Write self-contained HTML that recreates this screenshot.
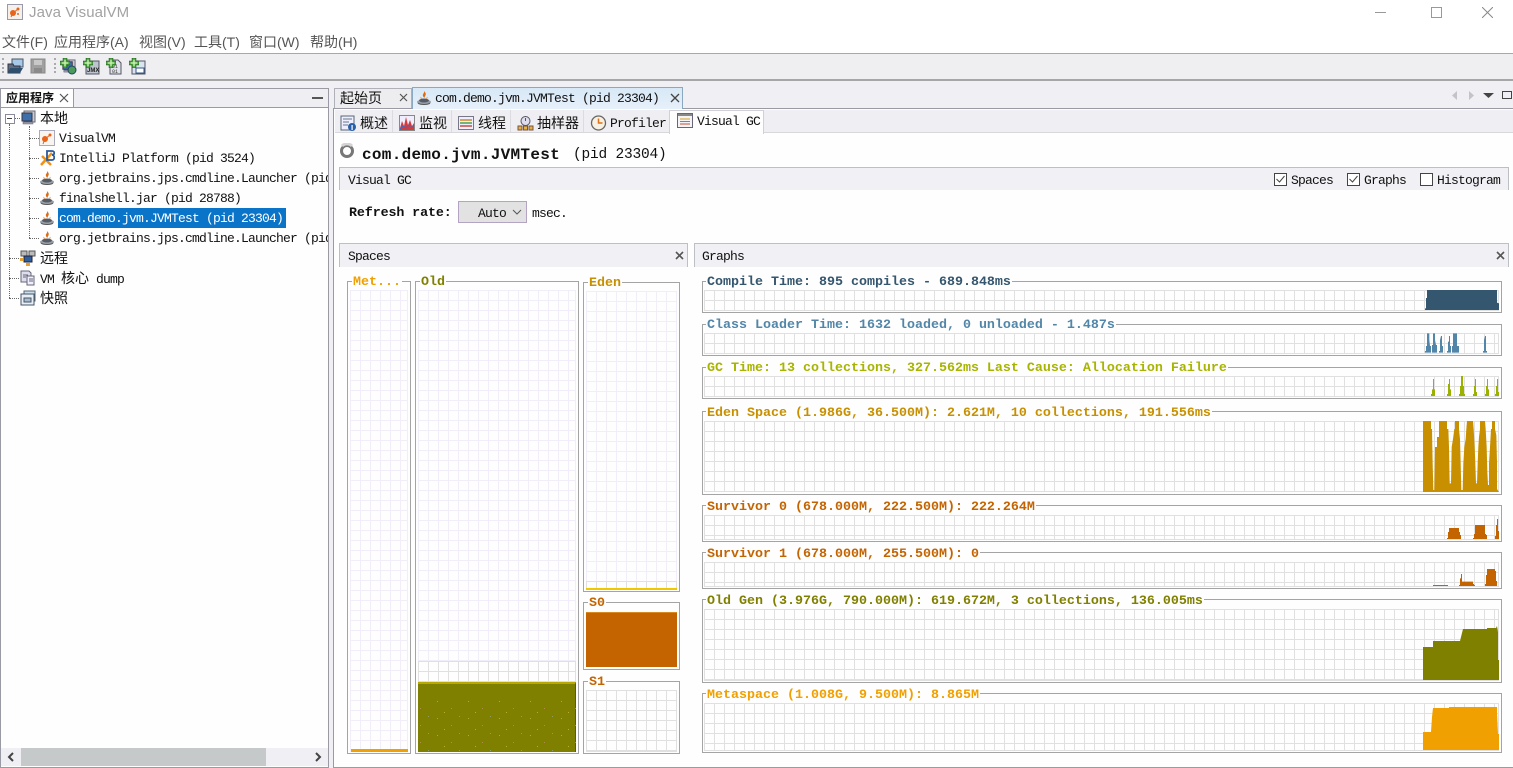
<!DOCTYPE html>
<html><head><meta charset="utf-8"><title>Java VisualVM</title>
<style>
html,body{margin:0;padding:0;width:1513px;height:768px;overflow:hidden;background:#f0f0f4}
body{position:relative;font-family:"Liberation Mono","Noto Sans CJK SC",monospace;color:#111}
div,span.t,svg.i{position:absolute}
.t{position:absolute;white-space:pre;line-height:20px;font-size:13px;letter-spacing:-.8px;height:20px;margin-top:1px}
.c{font-family:"Liberation Sans","Noto Sans CJK SC",sans-serif;font-size:14px;letter-spacing:0;margin-top:0}
.m{font-family:"Liberation Sans","Noto Sans CJK SC",sans-serif;font-size:14px;letter-spacing:0;color:#555;margin-top:0}
.b{font-weight:bold;font-size:13.34px;letter-spacing:0;background:#fefefe;padding:0 1px;height:13px;line-height:14px;margin-top:5px}
.box{border:1px solid #a4a4a4;box-sizing:border-box;background:#fefefe}
.g{background-image:linear-gradient(to right,#e0e0e0 1px,transparent 1px),linear-gradient(to bottom,#e0e0e0 1px,transparent 1px);background-size:10px 10px;border-right:1px solid #e0e0e0;border-bottom:1px solid #e0e0e0;box-sizing:border-box}
.l{background-image:linear-gradient(to right,#f1eefa 1px,transparent 1px),linear-gradient(to bottom,#f1eefa 1px,transparent 1px);background-size:10px 10px;border-right:1px solid #f1eefa;box-sizing:border-box}
.hd{background:#f0f0f5;border:1.5px solid #bcc0c6;border-bottom:0;box-sizing:border-box}
.sep{width:1px;background:#dcdce0;top:110px;height:22px}
.d{border-left:1px dotted #666;width:0}
.h{border-top:1px dotted #666;height:0}
</style></head><body>
<svg width="0" height="0" style="position:absolute"><defs>
<symbol id="java" viewBox="0 0 16 16"><path d="M8 1c1 2-2 3-1 5 .3 1 1 1.500 1.500 2-.2-1.500 2-3 1-5C9.300 2.500 9 2 8 1z" fill="#e06a10"/><path d="M5 7c-.5 1 .5 2 1 2M11 7c.5 1-.5 2-1 2" stroke="#e8a060" fill="none"/><ellipse cx="8" cy="12" rx="7" ry="2.500" fill="#9aa0a8"/><ellipse cx="8" cy="10.500" rx="5" ry="2" fill="#555c66"/><path d="M2 13c2 2 10 2 12 0" stroke="#555" fill="none"/></symbol>
<symbol id="plus" viewBox="0 0 16 16"><path d="M5 0h6v5h5v6h-5v5H5v-5H0V5h5z" fill="#5ab04a" stroke="#1f5f1f" stroke-width="1.200"/><path d="M8 3v10M3 8h10" stroke="#d0f4b8" stroke-width="2"/></symbol>
<symbol id="mon" viewBox="0 0 16 16"><rect x="4" y="1" width="11" height="11" fill="#c8ccd4" stroke="#667"/><rect x="2" y="3" width="10" height="8" fill="#3f6fa8" stroke="#334"/><rect x="3" y="12" width="10" height="2" fill="#99a" stroke="#667" stroke-width=".5"/></symbol>
</defs></svg>

<!-- title bar -->
<div style="left:0;top:0;width:1513px;height:53px;background:#fff"></div>
<svg class="i" style="left:7px;top:4px" width="16" height="16" viewBox="0 0 16 16"><rect x=".5" y=".5" width="15" height="15" fill="#f4f0ec" stroke="#99a"/><circle cx="6" cy="9" r="3" fill="#e8641a"/><circle cx="11" cy="5" r="1.500" fill="#e8641a"/><circle cx="11" cy="10" r="1" fill="#e8641a"/><path d="M6 9l5-4M4 13l2-4" stroke="#e8641a"/></svg>
<span class="t" style="left:29px;top:3px;margin-top:0;font:15px/20px 'Liberation Sans',sans-serif;letter-spacing:.1px;color:#a2a2a2">Java VisualVM</span>
<div style="left:1375px;top:12px;width:11px;height:1px;background:#999"></div>
<div style="left:1431px;top:7px;width:9px;height:9px;border:1px solid #999"></div>
<svg class="i" style="left:1482px;top:7px" width="11" height="11"><path d="M0 0l11 11M11 0L0 11" stroke="#888"/></svg>

<span class="t m" style="left:2px;top:32px">文件(F)</span>
<span class="t m" style="left:54px;top:32px">应用程序(A)</span>
<span class="t m" style="left:139px;top:32px">视图(V)</span>
<span class="t m" style="left:194px;top:32px">工具(T)</span>
<span class="t m" style="left:249px;top:32px">窗口(W)</span>
<span class="t m" style="left:310px;top:32px">帮助(H)</span>

<!-- toolbar -->
<div style="left:0;top:53px;width:1513px;height:1px;background:#a8a8a8"></div>
<div style="left:0;top:54px;width:1513px;height:25px;background:#efeff2"></div>
<div style="left:0;top:79px;width:1513px;height:1.500px;background:#a6a6a8"></div>
<div style="left:2px;top:58px;height:15px;width:0;border-left:2px dotted #aaa"></div>
<div style="left:54px;top:58px;height:15px;width:0;border-left:2px dotted #aaa"></div>
<svg class="i" style="left:7px;top:58px" width="17" height="16" viewBox="0 0 17 16"><rect x="5" y="1" width="11" height="8" fill="#a8c8e8" stroke="#456"/><path d="M1 6h5l1 2h6v7H1z" fill="#5c6e80" stroke="#334"/><path d="M1 15l2-5h13l-3 5z" fill="#2f4f6f"/></svg>
<svg class="i" style="left:30px;top:58px" width="16" height="16"><path d="M1 1h14v14H1z" fill="#a0a0a0" stroke="#888"/><rect x="4" y="2" width="8" height="5" fill="#c8c8c8"/><rect x="4" y="10" width="8" height="5" fill="#8a8a8a"/></svg>
<svg class="i" style="left:60px;top:58px" width="17" height="17"><use href="#mon" x="1" y="1" width="15" height="15"/><circle cx="12" cy="12" r="4" fill="#4a9a5a" stroke="#246"/><use href="#plus" x="0" y="0" width="10" height="10"/></svg>
<svg class="i" style="left:83px;top:58px" width="17" height="17"><rect x="3" y="3" width="13" height="13" fill="#bcc4cc" stroke="#556"/><text x="4" y="14" font-size="6" font-weight="bold" font-family="Liberation Sans" fill="#222">JMX</text><use href="#plus" x="0" y="0" width="10" height="10"/></svg>
<svg class="i" style="left:106px;top:58px" width="17" height="17"><path d="M4 2h8l3 3v11H4z" fill="#e0e4e8" stroke="#556"/><text x="6" y="10" font-size="5" fill="#333" font-family="Liberation Mono">01</text><text x="6" y="15" font-size="5" fill="#333" font-family="Liberation Mono">01</text><use href="#plus" x="0" y="0" width="10" height="10"/></svg>
<svg class="i" style="left:129px;top:58px" width="17" height="17"><rect x="3" y="3" width="13" height="13" fill="#d8e4f0" stroke="#556"/><rect x="7" y="10" width="8" height="5" fill="#fff" stroke="#358"/><use href="#plus" x="0" y="0" width="10" height="10"/></svg>

<!-- left panel -->
<div style="left:0;top:88px;width:329px;height:680px;border:1.500px solid #9a9aa4;box-sizing:border-box;background:#fefefe"></div>
<div style="left:1px;top:89px;width:327px;height:18px;background:#eeeef3"></div>
<div style="left:1px;top:107px;width:327px;height:1px;background:#9a9aa4"></div>
<div style="left:1px;top:89px;width:72px;height:18px;background:#fff;border-right:1px solid #9a9aa4"></div>
<span class="t c" style="left:6px;top:88px;font-size:12px;font-weight:bold">应用程序</span>
<svg class="i" style="left:59px;top:93px" width="10" height="10"><path d="M1 1l8 8M9 1L1 9" stroke="#555" stroke-width="1.200"/></svg>
<div style="left:312px;top:97px;width:11px;height:2px;background:#555"></div>

<div class="d" style="left:9px;top:124px;height:174px"></div>
<div class="d" style="left:29px;top:126px;height:112px"></div>
<div class="h" style="left:14px;top:118px;width:6px"></div>
<div class="h" style="left:29px;top:138px;width:10px"></div>
<div class="h" style="left:29px;top:158px;width:10px"></div>
<div class="h" style="left:29px;top:178px;width:10px"></div>
<div class="h" style="left:29px;top:198px;width:10px"></div>
<div class="h" style="left:29px;top:218px;width:10px"></div>
<div class="h" style="left:29px;top:238px;width:10px"></div>
<div class="h" style="left:9px;top:258px;width:10px"></div>
<div class="h" style="left:9px;top:278px;width:10px"></div>
<div class="h" style="left:9px;top:298px;width:10px"></div>
<div style="left:5px;top:114px;width:8px;height:8px;border:1px solid #8a8a9a;background:#fff"></div>
<div style="left:7px;top:118px;width:5px;height:1px;background:#444"></div>
<svg class="i" style="left:20px;top:110px" width="16" height="16"><use href="#mon" width="16" height="16"/></svg>
<span class="t c" style="left:40px;top:108px">本地</span>

<svg class="i" style="left:39px;top:130px" width="16" height="16"><rect x=".5" y=".5" width="15" height="15" fill="#f8f4f0" stroke="#aab"/><circle cx="6" cy="9" r="3" fill="#e8641a"/><circle cx="11" cy="5" r="1.500" fill="#e8641a"/><path d="M6 9l5-4M4 14l2-5" stroke="#e8641a"/></svg>
<span class="t" style="left:59px;top:128px">VisualVM</span>
<svg class="i" style="left:39px;top:150px" width="16" height="16"><path d="M2 15L13 3M3 6l9 9" stroke="#f09010" stroke-width="2.500"/><path d="M8 1h5c3 0 3 4 0 4 3 0 3 5 0 5H8z" fill="none" stroke="#2a5a9a" stroke-width="1.800"/></svg>
<span class="t" style="left:59px;top:148px">IntelliJ Platform (pid 3524)</span>
<svg class="i" style="left:39px;top:170px" width="16" height="16"><use href="#java" width="16" height="16"/></svg>
<span class="t" style="left:59px;top:168px;width:269px;overflow:hidden">org.jetbrains.jps.cmdline.Launcher (pid 12345)</span>
<svg class="i" style="left:39px;top:190px" width="16" height="16"><use href="#java" width="16" height="16"/></svg>
<span class="t" style="left:59px;top:188px">finalshell.jar (pid 28788)</span>
<svg class="i" style="left:39px;top:210px" width="16" height="16"><use href="#java" width="16" height="16"/></svg>
<div style="left:58px;top:208px;width:228px;height:20px;background:#0a74c8"></div>
<span class="t" style="left:59px;top:208px;color:#fff">com.demo.jvm.JVMTest (pid 23304)</span>
<svg class="i" style="left:39px;top:230px" width="16" height="16"><use href="#java" width="16" height="16"/></svg>
<span class="t" style="left:59px;top:228px;width:269px;overflow:hidden">org.jetbrains.jps.cmdline.Launcher (pid 12345)</span>
<svg class="i" style="left:20px;top:250px" width="16" height="16"><rect x="1" y="1" width="6" height="5" fill="#bbb" stroke="#555"/><rect x="9" y="1" width="6" height="5" fill="#bbb" stroke="#555"/><rect x="4" y="6" width="8" height="6" fill="#2f5f9f" stroke="#223"/><rect x="0" y="8" width="3" height="3" fill="#e8a030"/><rect x="6" y="13" width="4" height="3" fill="#e8a030"/></svg>
<span class="t c" style="left:40px;top:248px">远程</span>
<svg class="i" style="left:20px;top:270px" width="16" height="16"><path d="M1 1h8l2 2v9H1z" fill="#dde" stroke="#667"/><path d="M7 6h7v9H7z" fill="#eef" stroke="#667"/><path d="M3 5h5M3 7h3M9 9h4M9 11h4" stroke="#667"/></svg>
<span class="t" style="left:40px;top:269px;font-family:'Liberation Mono','Noto Sans CJK SC',monospace">VM <span style="font-size:14px;letter-spacing:0">核心</span> dump</span>
<svg class="i" style="left:20px;top:290px" width="16" height="16"><rect x="4" y="1" width="11" height="10" fill="#cde" stroke="#567"/><rect x="1" y="4" width="13" height="11" fill="#e8eef4" stroke="#456"/><rect x="4" y="8" width="7" height="4" fill="#abc" stroke="#456"/></svg>
<span class="t c" style="left:40px;top:288px">快照</span>

<!-- left scrollbar -->
<div style="left:1px;top:748px;width:327px;height:18px;background:#f0f0f4"></div>
<div style="left:21px;top:748px;width:245px;height:18px;background:#c6c9c9"></div>
<svg class="i" style="left:7px;top:752px" width="8" height="10"><path d="M6 1L2 5l4 4" fill="none" stroke="#444" stroke-width="2"/></svg>
<svg class="i" style="left:314px;top:752px" width="8" height="10"><path d="M2 1l4 4-4 4" fill="none" stroke="#444" stroke-width="2"/></svg>

<!-- right panel -->
<div style="left:333px;top:108px;width:1180px;height:660px;background:#fefefe;border-left:1.500px solid #9a9aa4;border-top:1.500px solid #9a9aa4;border-bottom:1.500px solid #9a9aa4;box-sizing:border-box"></div>
<div style="left:334px;top:88px;width:78px;height:20px;background:#ededf0;border:1px solid #b0b0b8;border-bottom:0;box-sizing:border-box"></div>
<span class="t c" style="left:340px;top:88px">起始页</span>
<svg class="i" style="left:399px;top:93px" width="9" height="9"><path d="M1 1l7 7M8 1L1 8" stroke="#555" stroke-width="1.200"/></svg>
<div style="left:412px;top:87px;width:271px;height:22px;background:linear-gradient(#d8e8f6,#e6f0fa);border:1px solid #8aa8c0;border-bottom:0;box-sizing:border-box"></div>
<svg class="i" style="left:416px;top:90px" width="16" height="16"><use href="#java" width="16" height="16"/></svg>
<span class="t" style="left:435px;top:88px">com.demo.jvm.JVMTest (pid 23304)</span>
<svg class="i" style="left:670px;top:93px" width="10" height="10"><path d="M1 1l8 8M9 1L1 9" stroke="#444" stroke-width="1.300"/></svg>
<svg class="i" style="left:1449px;top:88px" width="64" height="12"><path d="M8 3v9L3 7.500z" fill="#c4c4c8"/><path d="M20 3v9l5-4.500z" fill="#c4c4c8"/><path d="M34 5h11l-5.500 5z" fill="#444"/><rect x="53.500" y="3.500" width="9" height="7" fill="none" stroke="#444"/></svg>

<!-- sub tabs -->
<div style="left:335px;top:110px;width:1178px;height:23px;background:#efeff3;border-bottom:1px solid #d8d8dc;box-sizing:border-box"></div>
<div class="sep" style="left:392px"></div><div class="sep" style="left:451px"></div><div class="sep" style="left:510px"></div><div class="sep" style="left:583px"></div>
<div style="left:669px;top:110px;width:95px;height:24px;background:#fefefe;border:1px solid #d0d0d6;border-bottom:0;box-sizing:border-box"></div>
<svg class="i" style="left:340px;top:115px" width="17" height="17"><rect x="1" y="1" width="13" height="14" fill="#eef" stroke="#567"/><path d="M3 4h9M3 7h6M3 10h5" stroke="#678"/><circle cx="12" cy="12" r="4" fill="#2a5fa8"/><rect x="11.500" y="10" width="1.200" height="5" fill="#fff"/></svg>
<span class="t c" style="left:360px;top:113px">概述</span>
<svg class="i" style="left:399px;top:115px" width="16" height="16"><rect x=".5" y=".5" width="15" height="15" fill="#eef" stroke="#888"/><path d="M1 13l2-7 2 5 2-9 2 8 2-5 2 6 2-3v7H1z" fill="#d83a3a"/><path d="M1 14l3-3 3 2 3-3 5 3" stroke="#3a6ac8" fill="none"/></svg>
<span class="t c" style="left:419px;top:113px">监视</span>
<svg class="i" style="left:458px;top:115px" width="16" height="16"><rect x=".5" y="1.500" width="15" height="13" fill="#eef" stroke="#778"/><path d="M2 5h12" stroke="#d08a20" stroke-width="1.500"/><path d="M2 8h12" stroke="#4aa04a" stroke-width="1.500"/><path d="M2 11h12" stroke="#c05040" stroke-width="1.500"/></svg>
<span class="t c" style="left:478px;top:113px">线程</span>
<svg class="i" style="left:517px;top:115px" width="17" height="16"><circle cx="8.500" cy="6" r="4.500" fill="#dde" stroke="#556"/><path d="M8.500 6V3" stroke="#555"/><rect x="1" y="11" width="4" height="4" fill="#e8b040" stroke="#754"/><rect x="6.500" y="11" width="4" height="4" fill="#e8b040" stroke="#754"/><rect x="12" y="11" width="4" height="4" fill="#e8b040" stroke="#754"/></svg>
<span class="t c" style="left:537px;top:113px">抽样器</span>
<svg class="i" style="left:590px;top:115px" width="17" height="16"><circle cx="8.500" cy="8" r="7" fill="#f8f0e0" stroke="#666" stroke-width="1.300"/><path d="M8.500 3.500V8h4" stroke="#e0701a" stroke-width="1.500" fill="none"/></svg>
<span class="t" style="left:610px;top:113px">Profiler</span>
<svg class="i" style="left:677px;top:113px" width="16" height="15"><rect x=".5" y=".5" width="15" height="14" fill="#f4f4f8" stroke="#667"/><path d="M1 2h14" stroke="#888" stroke-width="2"/><path d="M3 6h10" stroke="#d8a020"/><path d="M3 8.500h10" stroke="#60a040"/><path d="M3 11h10" stroke="#c05030"/></svg>
<span class="t" style="left:697px;top:111px">Visual GC</span>

<!-- heading -->
<svg class="i" style="left:339px;top:143px" width="16" height="16"><circle cx="8" cy="8" r="5.500" fill="none" stroke="#777" stroke-width="3"/><path d="M3 3a7 7 0 0 1 10 0" stroke="#d4d4d4" stroke-width="3" fill="none"/></svg>
<span class="t" style="left:362px;top:144px;font-size:16px;font-weight:bold;letter-spacing:.3px;font-family:'Liberation Mono',monospace">com.demo.jvm.JVMTest</span>
<span class="t" style="left:573px;top:144px;font-size:14.5px;letter-spacing:-.2px">(pid 23304)</span>

<div class="hd" style="left:339px;top:167px;width:1170px;height:23px"></div>
<span class="t" style="left:348px;top:170px">Visual GC</span>
<svg class="i" style="left:1274px;top:173px" width="14" height="14"><rect x=".5" y=".5" width="12" height="12" fill="#fff" stroke="#444"/><path d="M2.500 6l3 3 5-6" stroke="#444" fill="none"/></svg>
<span class="t" style="left:1291px;top:170px">Spaces</span>
<svg class="i" style="left:1347px;top:173px" width="14" height="14"><rect x=".5" y=".5" width="12" height="12" fill="#fff" stroke="#444"/><path d="M2.500 6l3 3 5-6" stroke="#444" fill="none"/></svg>
<span class="t" style="left:1364px;top:170px">Graphs</span>
<svg class="i" style="left:1420px;top:173px" width="14" height="14"><rect x=".5" y=".5" width="12" height="12" fill="#fff" stroke="#444"/></svg>
<span class="t" style="left:1437px;top:170px">Histogram</span>

<span class="t" style="left:349px;top:203px;font-weight:bold;letter-spacing:-.1px;font-size:13.34px">Refresh rate:</span>
<div style="left:458px;top:201px;width:69px;height:22px;background:#e2e2e2;border:1px solid #b4a4c4;box-sizing:border-box"></div>
<span class="t" style="left:478px;top:203px">Auto</span>
<svg class="i" style="left:512px;top:209px" width="10" height="7"><path d="M1 1l4 4 4-4" fill="none" stroke="#555"/></svg>
<span class="t" style="left:532px;top:203px">msec.</span>

<!-- spaces -->
<div class="hd" style="left:339px;top:243px;width:349px;height:24px"></div>
<span class="t" style="left:348px;top:246px">Spaces</span>
<svg class="i" style="left:675px;top:251px" width="9" height="9"><path d="M1 1l7 7M8 1L1 8" stroke="#555" stroke-width="1.600"/></svg>
<div class="hd" style="left:694px;top:243px;width:815px;height:24px"></div>
<span class="t" style="left:702px;top:246px">Graphs</span>
<svg class="i" style="left:1496px;top:251px" width="9" height="9"><path d="M1 1l7 7M8 1L1 8" stroke="#555" stroke-width="1.600"/></svg>

<div class="box" style="left:347px;top:281px;width:64px;height:473px"></div>
<div class="l" style="left:350px;top:290px;width:58px;height:462px"></div>
<div style="left:351px;top:749px;width:57px;height:3px;background:#f0a000"></div>
<span class="t b" style="left:352px;top:271px;color:#f0a000">Met...</span>

<div class="box" style="left:415px;top:281px;width:164px;height:473px"></div>
<div class="l" style="left:418px;top:290px;width:158px;height:371px"></div>
<div class="g" style="left:418px;top:661px;width:158px;height:21px"></div>
<div style="left:418px;top:682px;width:158px;height:70px;background:#808000;border-top:2px solid #b8a800;border-right:1px solid #5c5c00;box-sizing:border-box"></div>
<span class="t b" style="left:420px;top:271px;color:#808000">Old</span>

<div class="box" style="left:583px;top:282px;width:97px;height:310px"></div>
<div class="l" style="left:586px;top:291px;width:91px;height:291px"></div>
<div class="g" style="left:586px;top:581px;width:91px;height:8px;border-bottom:0"></div>
<div style="left:586px;top:588px;width:91px;height:1.500px;background:#f0c800"></div>
<span class="t b" style="left:588px;top:272px;color:#c89000">Eden</span>

<div class="box" style="left:583px;top:602px;width:97px;height:68px"></div>
<div style="left:586px;top:612px;width:91px;height:55px;background:#c46400;border-top:1px solid #d88a20;box-sizing:border-box"></div>
<span class="t b" style="left:588px;top:592px;color:#c46400">S0</span>

<div class="box" style="left:583px;top:681px;width:97px;height:73px"></div>
<div class="g" style="left:586px;top:690px;width:91px;height:62px"></div>
<span class="t b" style="left:588px;top:671px;color:#c46400">S1</span>

<!-- graphs -->
<div class="box" style="left:702px;top:281px;width:800px;height:32px"></div>
<div class="g" style="left:704px;top:290px;width:795px;height:21px"></div>
<span class="t b" style="left:706px;top:271px;color:#34566e">Compile Time: 895 compiles - 689.848ms</span>

<div class="box" style="left:702px;top:324px;width:800px;height:32px"></div>
<div class="g" style="left:704px;top:333px;width:795px;height:21px"></div>
<span class="t b" style="left:706px;top:314px;color:#5286a8">Class Loader Time: 1632 loaded, 0 unloaded - 1.487s</span>

<div class="box" style="left:702px;top:367px;width:800px;height:32px"></div>
<div class="g" style="left:704px;top:376px;width:795px;height:21px"></div>
<span class="t b" style="left:706px;top:357px;color:#a8b400">GC Time: 13 collections, 327.562ms Last Cause: Allocation Failure</span>

<div class="box" style="left:702px;top:411px;width:800px;height:84px"></div>
<div class="g" style="left:704px;top:421px;width:795px;height:71px"></div>
<span class="t b" style="left:706px;top:402px;color:#c89000">Eden Space (1.986G, 36.500M): 2.621M, 10 collections, 191.556ms</span>

<div class="box" style="left:702px;top:505px;width:800px;height:37px"></div>
<div class="g" style="left:704px;top:515px;width:795px;height:25px"></div>
<span class="t b" style="left:706px;top:496px;color:#c46400">Survivor 0 (678.000M, 222.500M): 222.264M</span>

<div class="box" style="left:702px;top:552px;width:800px;height:37px"></div>
<div class="g" style="left:704px;top:562px;width:795px;height:25px"></div>
<span class="t b" style="left:706px;top:543px;color:#c46400">Survivor 1 (678.000M, 255.500M): 0</span>

<div class="box" style="left:702px;top:599px;width:800px;height:84px"></div>
<div class="g" style="left:704px;top:609px;width:795px;height:72px"></div>
<span class="t b" style="left:706px;top:590px;color:#808000">Old Gen (3.976G, 790.000M): 619.672M, 3 collections, 136.005ms</span>

<div class="box" style="left:702px;top:693px;width:800px;height:60px"></div>
<div class="g" style="left:704px;top:703px;width:795px;height:48px"></div>
<span class="t b" style="left:706px;top:684px;color:#f0a000">Metaspace (1.008G, 9.500M): 8.865M</span>

<!-- charts -->
<svg class="i" style="left:0;top:0;pointer-events:none" width="1513" height="768" viewBox="0 0 1513 768">
<defs><pattern id="sp" width="31" height="17" patternUnits="userSpaceOnUse"><rect x="3" y="4" width="1" height="1" fill="#a8b030"/><rect x="17" y="11" width="1" height="1" fill="#b09040"/><rect x="25" y="2" width="1" height="1" fill="#90a060"/><rect x="10" y="15" width="1" height="1" fill="#c0b020"/></pattern></defs>
<rect x="418" y="700" width="158" height="52" fill="url(#sp)"/>
<g transform="translate(1340,270) scale(.33333)">
<polygon fill="#34566e" points="255,120 255,115 258,115 258,84 261,84 261,60 471,60 471,98 477,100 477,120"/>
<polygon fill="#5286a8" points="255,248 255,243 258,243 258,228 261,228 261,190 268,190 268,210 270,228 273,228 273,248 276,248 276,225 279,225 279,190 285,190 285,210 288,225 291,225 291,248 297,248 297,243 300,243 300,210 303,198 306,198 306,228 309,228 309,248 321,248 321,243 324,243 324,215 327,215 327,198 330,198 330,228 333,228 333,248 336,248 336,228 339,228 339,190 351,190 351,228 357,228 357,248 429,248 429,243 432,243 432,210 435,198 438,198 438,243 441,243 441,248"/>
<g fill="#9cb000">
<polygon points="273,378 273,372 276,372 276,358 279,358 279,327 282,327 282,358 285,358 285,378"/>
<polygon points="321,378 321,372 324,372 324,342 327,342 327,327 330,327 330,358 333,358 333,378"/>
<polygon points="357,378 357,372 360,372 360,348 363,348 363,318 369,318 369,348 372,348 372,372 375,372 375,378"/>
<polygon points="399,378 399,372 402,372 402,348 405,348 405,327 408,327 408,366 411,366 411,378"/>
<polygon points="435,378 435,372 438,372 438,348 441,348 441,327 444,327 444,358 447,358 447,378"/>
<polygon points="465,378 465,372 468,372 468,348 471,348 471,327 474,327 474,366 477,366 477,378"/>
</g>
</g>
<g transform="translate(1415,415) scale(.33333)">
<polygon fill="#c89000" points="24,231 24,18 48,18 48,42 51,42 53,145 55,225 58,225 60,96 66,96 66,66 72,66 72,18 96,18 96,42 100,42 102,96 104,205 108,205 110,96 114,72 118,42 120,42 120,18 132,18 132,42 135,72 137,145 139,225 143,225 145,145 148,96 152,72 154,42 156,18 174,18 176,42 179,96 181,145 183,205 186,205 188,145 190,96 192,66 195,42 195,18 210,18 212,42 215,96 217,170 219,210 222,210 222,145 225,96 228,42 231,42 231,18 240,18 240,42 244,60 246,140 246,222 252,231"/>
</g>
<g transform="translate(1340,495) scale(.33333)">
<g fill="#c46400">
<polygon points="321,132 321,129 324,129 324,111 327,111 327,99 357,99 357,111 360,111 360,120 363,120 363,132"/>
<polygon points="399,132 399,129 402,129 402,117 405,117 405,90 435,90 435,117 438,117 438,120 441,120 441,132"/>
<polygon points="465,132 465,123 468,123 468,90 471,90 471,72 474,72 474,108 477,108 477,132"/>
<polygon points="279,273 279,270 324,270 324,273"/>
<polygon points="357,273 357,270 360,270 360,250 363,250 363,237 366,237 366,260 399,260 399,267 402,267 402,270 405,270 405,273"/>
<polygon points="435,273 435,267 438,267 438,240 441,240 441,222 465,222 465,228 468,228 468,258 471,258 471,273"/>
</g>
<polygon fill="#808000" points="249,555 249,456 279,456 279,438 360,438 363,426 369,402 441,402 441,399 468,399 471,393 474,411 474,495 477,495 477,555"/>
<polygon fill="#f0a000" points="249,765 249,711 273,711 276,666 279,639 327,639 327,636 471,636 471,654 474,717 477,717 477,765"/>
</g>
</svg>
</body></html>
